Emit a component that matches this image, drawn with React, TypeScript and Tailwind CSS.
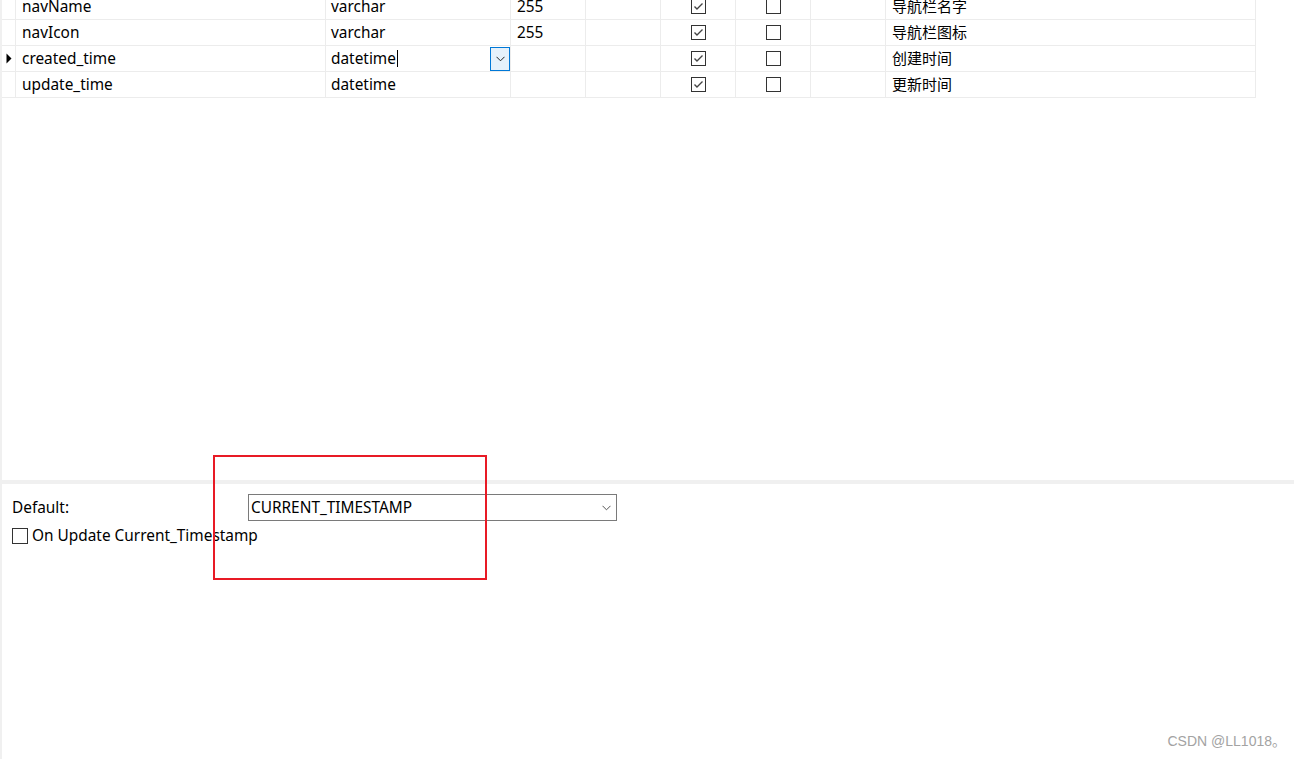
import React from "react";

const cols = [14, 310, 185, 75, 75, 75, 75, 75, 370];

type Row = {
  name: string;
  type: string;
  len: string;
  comment: string;
  current?: boolean;
};

const rows: Row[] = [
  { name: "navName", type: "varchar", len: "255", comment: "导航栏名字" },
  { name: "navIcon", type: "varchar", len: "255", comment: "导航栏图标" },
  { name: "created_time", type: "datetime", len: "", comment: "创建时间", current: true },
  { name: "update_time", type: "datetime", len: "", comment: "更新时间" },
];

function Box({ checked }: { checked?: boolean }) {
  return (
    <div className="w-[15px] h-[15px] border border-[#333333] bg-white flex items-center justify-center">
      {checked && (
        <svg width="13" height="13" viewBox="0 0 13 13">
          <path d="M2.5 6.5 L5 9 L10.5 3.5" fill="none" stroke="#444444" strokeWidth="1.4" />
        </svg>
      )}
    </div>
  );
}

function Chevron({ w = 9, color = "#333" }: { w?: number; color?: string }) {
  return (
    <svg width={w} height="6" viewBox="0 0 9 6">
      <path d="M0.5 0.8 L4.5 4.8 L8.5 0.8" fill="none" stroke={color} strokeWidth="1" />
    </svg>
  );
}

export default function App() {
  return (
    <div className="relative w-[1294px] h-[759px] overflow-hidden bg-white border-l-2 border-[#f0f0f0] text-[15.4px] text-black font-['Noto_Sans','Noto_Sans_CJK_SC',sans-serif]">
      {/* top grid pane */}
      <div className="h-[480px] overflow-hidden">
        <div className="mt-[-6px] flex flex-col">
          {rows.map((r, i) => (
            <div key={i} className="flex h-[26px]">
              <div
                style={{ width: cols[0] }}
                className="shrink-0 border-r border-b border-[#ececec] flex items-center justify-center"
              >
                {r.current && (
                  <svg width="6" height="11" viewBox="0 0 6 11">
                    <path d="M0.5 0.5 L5.5 5.5 L0.5 10.5 Z" fill="#000" />
                  </svg>
                )}
              </div>
              <div
                style={{ width: cols[1] }}
                className="shrink-0 border-r border-b border-[#ececec] flex items-center pl-[6px] leading-none"
              >
                {r.name}
              </div>
              <div
                style={{ width: cols[2] }}
                className="shrink-0 border-r border-b border-[#ececec] flex items-center justify-between pl-[5px] leading-none"
              >
                <span className="flex items-center">
                  {r.type}
                  {r.current && <span className="ml-[1px] w-[1px] h-[17px] bg-black" />}
                </span>
                {r.current && (
                  <div className="w-[20px] h-[24px] border border-[#0078d7] bg-[#e5f1fb] flex items-center justify-center">
                    <Chevron w={9} color="#222" />
                  </div>
                )}
              </div>
              <div
                style={{ width: cols[3] }}
                className="shrink-0 border-r border-b border-[#ececec] flex items-center pl-[6px] leading-none"
              >
                {r.len}
              </div>
              <div style={{ width: cols[4] }} className="shrink-0 border-r border-b border-[#ececec]" />
              <div
                style={{ width: cols[5] }}
                className="shrink-0 border-r border-b border-[#ececec] flex items-center justify-center"
              >
                <Box checked />
              </div>
              <div
                style={{ width: cols[6] }}
                className="shrink-0 border-r border-b border-[#ececec] flex items-center justify-center"
              >
                <Box />
              </div>
              <div style={{ width: cols[7] }} className="shrink-0 border-r border-b border-[#ececec]" />
              <div
                style={{ width: cols[8] }}
                className="shrink-0 border-r border-b border-[#ececec] flex items-center pl-[6px] leading-none text-[15px]"
              >
                {r.comment}
              </div>
            </div>
          ))}
        </div>
      </div>

      {/* splitter */}
      <div className="h-[4px] bg-[#f0f0f0]" />

      {/* bottom pane */}
      <div className="pt-[10px] pl-[10px]">
        <div className="flex items-center h-[27px]">
          <div className="w-[236px] leading-none">Default:</div>
          <div className="w-[369px] h-[27px] border border-[#7a7a7a] flex items-center justify-between pl-[2px] pr-[5px] leading-none">
            <span>CURRENT_TIMESTAMP</span>
            <Chevron w={9} color="#555" />
          </div>
        </div>
        <div className="flex items-center mt-[6px] h-[17px]">
          <div className="w-[16px] h-[16px] border border-[#333333] bg-white" />
          <span className="ml-[4px] leading-none">On Update Current_Timestamp</span>
        </div>
      </div>

      {/* red highlight rectangle */}
      <div className="absolute left-[211px] top-[455px] w-[274px] h-[125px] border-2 border-[#e81a25] pointer-events-none" />

      {/* watermark */}
      <div className="absolute right-[8px] bottom-[7px] text-[14px] text-[#a3a3a3] font-['Liberation_Sans','Noto_Sans_CJK_SC',sans-serif]">
        CSDN @LL1018。
      </div>
    </div>
  );
}
